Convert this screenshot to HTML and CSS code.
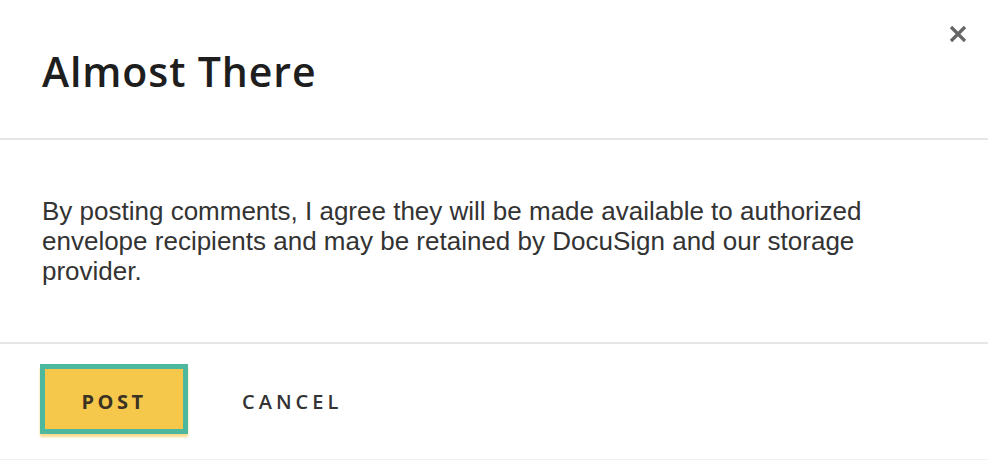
FILE: index.html
```html
<!DOCTYPE html>
<html>
<head>
<meta charset="utf-8">
<link rel="stylesheet" href="styles.css">
</head>
<body>
<div class="dialog">
  <header class="dialog-header">
    <h1 class="dialog-title">Almost There</h1>
    <button class="close-btn" aria-label="Close">
      <svg width="20" height="20" viewBox="0 0 20 20"><path d="M3 3 L17 17 M17 3 L3 17" stroke="#666" stroke-width="3.2" stroke-linecap="butt"/></svg>
    </button>
  </header>
  <div class="dialog-body">
    <p>By posting comments, I agree they will be made available to authorized envelope recipients and may be retained by DocuSign and our storage provider.</p>
  </div>
  <footer class="dialog-footer">
    <button class="btn btn-primary">POST</button>
    <button class="btn btn-secondary">CANCEL</button>
  </footer>
</div>
</body>
</html>
```

FILE: styles.css
```css
html, body {
  margin: 0;
  padding: 0;
  background: #fff;
}
.dialog {
  width: 988px;
  height: 460px;
  display: flex;
  flex-direction: column;
  box-sizing: border-box;
  border-bottom: 1px solid #f0f0f0;
}
.dialog-header {
  height: 140px;
  flex: none;
  box-sizing: border-box;
  border-bottom: 2px solid #e6e6e6;
  position: relative;
  display: flex;
  align-items: flex-start;
  padding: 46px 42px 0 42px;
}
.dialog-title {
  margin: 0;
  font-family: "Open Sans", sans-serif;
  font-weight: 600;
  font-size: 41px;
  line-height: 50px;
  color: #1e1e1e;
  letter-spacing: 0.9px;
}
.close-btn {
  position: absolute;
  top: 24px;
  right: 20px;
  width: 20px;
  height: 20px;
  padding: 0;
  border: 0;
  background: none;
  display: flex;
}
.dialog-body {
  height: 204px;
  flex: none;
  box-sizing: border-box;
  border-bottom: 2px solid #e6e6e6;
  padding: 56px 42px 0 42px;
}
.dialog-body p {
  margin: 0;
  font-family: "Liberation Sans", Arial, sans-serif;
  font-size: 26px;
  line-height: 30px;
  color: #333;
  max-width: 840px;
}
.dialog-footer {
  display: flex;
  align-items: center;
  padding: 20px 40px 0 40px;
  gap: 54px;
}
.btn {
  font-family: "Open Sans", sans-serif;
  font-weight: 600;
  font-size: 20px;
  letter-spacing: 4px;
  border: 0;
  background: none;
  padding: 0;
  cursor: pointer;
}
.btn-primary {
  width: 148px;
  height: 70px;
  box-sizing: border-box;
  background: #f5c84c;
  border: 5px solid #4db89e;
  color: #3a3222;
  font-weight: 700;
  letter-spacing: 3.5px;
  padding-top: 4px;
  padding-left: 0;
  box-shadow: 0 3px 2px #f8dc8e;
}
.btn-secondary {
  color: #333;
  padding-top: 4px;
}
```
